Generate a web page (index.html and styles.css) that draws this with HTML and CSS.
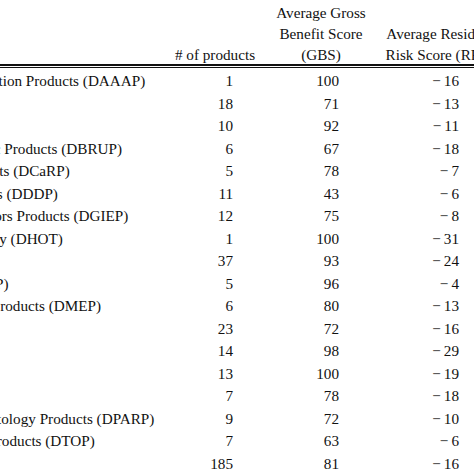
FILE: index.html
```html
<!DOCTYPE html>
<html>
<head>
<meta charset="utf-8">
<link rel="stylesheet" href="styles.css">
</head>
<body>
<table class="tbl">
  <colgroup>
    <col class="c-name">
    <col class="c-num">
    <col class="c-gbs">
    <col class="c-rrs">
  </colgroup>
  <thead>
    <tr>
      <th class="h-name"></th>
      <th class="h-num"># of products</th>
      <th class="h-gbs">Average Gross<br>Benefit Score<br>(GBS)</th>
      <th class="h-rrs">Average Residual<br>Risk Score (RRS)</th>
    </tr>
  </thead>
  <tbody>
    <tr><td>Division of Anesthesia, Analgesia, and Addiction Products (DAAAP)</td><td>1</td><td>100</td><td>−&thinsp;16</td></tr>
    <tr><td>Division of Anti-Infective Products (DAIP)</td><td>18</td><td>71</td><td>−&thinsp;13</td></tr>
    <tr><td>Division of Antiviral Products (DAVP)</td><td>10</td><td>92</td><td>−&thinsp;11</td></tr>
    <tr><td>Division of Bone, Reproductive and Urologic Products (DBRUP)</td><td>6</td><td>67</td><td>−&thinsp;18</td></tr>
    <tr><td>Division of Cardiovascular and Renal Products (DCaRP)</td><td>5</td><td>78</td><td>−&thinsp;7</td></tr>
    <tr><td>Division of Dermatology and Dental Products (DDDP)</td><td>11</td><td>43</td><td>−&thinsp;6</td></tr>
    <tr><td>Division of Gastroenterology and Inborn Errors Products (DGIEP)</td><td>12</td><td>75</td><td>−&thinsp;8</td></tr>
    <tr><td>Division of Hematology Oncology Toxicology (DHOT)</td><td>1</td><td>100</td><td>−&thinsp;31</td></tr>
    <tr><td>Division of Hematology Products (DHP)</td><td>37</td><td>93</td><td>−&thinsp;24</td></tr>
    <tr><td>Division of Medical Imaging Products (DMIP)</td><td>5</td><td>96</td><td>−&thinsp;4</td></tr>
    <tr><td>Division of Metabolism and Endocrinology Products (DMEP)</td><td>6</td><td>80</td><td>−&thinsp;13</td></tr>
    <tr><td>Division of Neurology Products (DNP)</td><td>23</td><td>72</td><td>−&thinsp;16</td></tr>
    <tr><td>Division of Oncology Products 1 (DOP1)</td><td>14</td><td>98</td><td>−&thinsp;29</td></tr>
    <tr><td>Division of Oncology Products 2 (DOP2)</td><td>13</td><td>100</td><td>−&thinsp;19</td></tr>
    <tr><td>Division of Psychiatry Products (DPP)</td><td>7</td><td>78</td><td>−&thinsp;18</td></tr>
    <tr><td>Division of Pulmonary, Allergy, and Rheumatology Products (DPARP)</td><td>9</td><td>72</td><td>−&thinsp;10</td></tr>
    <tr><td>Division of Transplant and Ophthalmology Products (DTOP)</td><td>7</td><td>63</td><td>−&thinsp;6</td></tr>
    <tr><td>Total</td><td>185</td><td>81</td><td>−&thinsp;16</td></tr>
  </tbody>
</table>
</body>
</html>
```
FILE: styles.css
```css
html, body {
  margin: 0;
  padding: 0;
  background: #fff;
  overflow: hidden;
}
body {
  width: 474px;
  height: 474px;
  font-family: "Liberation Serif", "Times New Roman", serif;
  font-size: 15.2px;
  color: #111;
}
.tbl {
  margin-left: -277px;
  border-collapse: separate;
  border-spacing: 0;
  table-layout: fixed;
  width: 779px;
}
.c-name { width: 447px; }
.c-num { width: 94px; }
.c-gbs { width: 108px; }
.c-rrs { width: 130px; }

.tbl th {
  font-weight: normal;
  vertical-align: bottom;
  text-align: center;
  line-height: 21px;
  white-space: nowrap;
  padding: 2px 0 2px 0;
  border-bottom: 1px solid #111;
  background: linear-gradient(#111, #111) no-repeat left bottom 1px / 100% 2px;
}
.tbl th.h-num { padding-right: 4px; }
.tbl th.h-gbs { padding-left: 6px; }
.tbl th.h-rrs { padding-left: 6px; }

.tbl td {
  line-height: 22.5px;
  padding: 0;
  white-space: nowrap;
  text-align: right;
}
.tbl td:nth-child(1) { text-align: left; }
.tbl td:nth-child(2) { padding-right: 31px; }
.tbl td:nth-child(3) { padding-right: 33px; }
.tbl td:nth-child(4) { padding-right: 43px; }
.tbl tbody tr:first-child td { padding-top: 2px; }
```
